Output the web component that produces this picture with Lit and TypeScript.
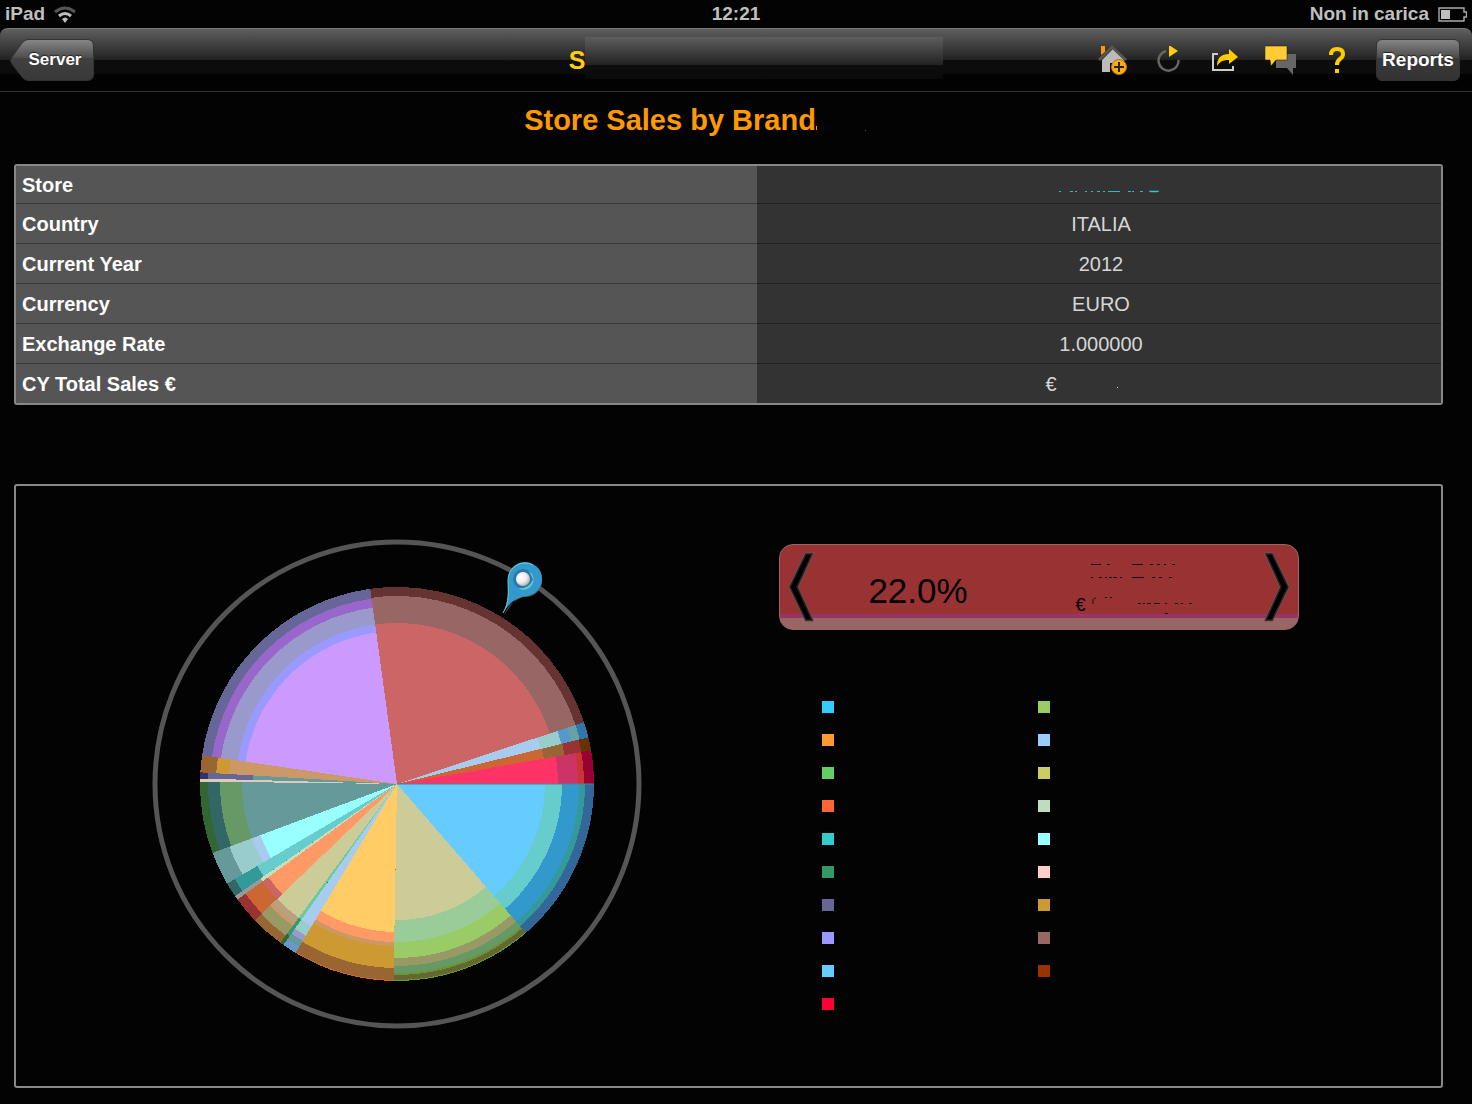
import { LitElement, html, svg, css } from "lit";
import { customElement } from "lit/decorators.js";

type Band = [outerRadius: number, colour: string];
interface Slice {
  end: number;
  bands: Band[];
}

/* Slices run clockwise from three o'clock; each one starts where the last ends. */
const SLICES: Slice[] = [
  { end: 49.1, bands: [[148, "#66ccff"], [165, "#66cccc"], [182, "#3399cc"], [188, "#339999"], [197, "#336699"]] },
  { end: 91, bands: [[136, "#cccc99"], [158, "#99cc99"], [174, "#99cc66"], [182, "#999966"], [189, "#669966"], [191, "#669933"], [196, "#666633"], [197, "#669933"]] },
  { end: 121, bands: [[148, "#ffcc66"], [158, "#ff9966"], [162, "#cc9966"], [184, "#cc9933"], [196, "#996633"], [197, "#cc6633"]] },
  { end: 125.2, bands: [[166, "#a8ccf0"], [177, "#99cccc"], [183, "#9999cc"], [190, "#669999"], [197, "#6699cc"]] },
  { end: 126.3, bands: [[166, "#66cc99"], [186, "#339966"], [197, "#336633"]] },
  { end: 136.2, bands: [[166, "#cccc99"], [173, "#b8a080"], [176, "#cc9966"], [188, "#999966"], [197, "#996633"]] },
  { end: 144.1, bands: [[159, "#ff9966"], [166, "#cc6666"], [187, "#cc6633"], [197, "#993333"]] },
  { end: 145.3, bands: [[166, "#ccddbb"], [197, "#999999"]] },
  { end: 149.6, bands: [[162, "#66cccc"], [188, "#339999"], [197, "#336666"]] },
  { end: 159.5, bands: [[146, "#99ffff"], [155, "#a8ccf0"], [179, "#99cccc"], [197, "#669999"]] },
  { end: 180.7, bands: [[155, "#669999"], [177, "#669966"], [189, "#336666"], [197, "#336633"]] },
  { end: 181.6, bands: [[197, "#ddccbb"]] },
  { end: 183.4, bands: [[144, "#669999"], [189, "#666699"], [197, "#333366"]] },
  { end: 188.4, bands: [[168, "#cc9966"], [181, "#cc9933"], [197, "#996633"]] },
  { end: 262.2, bands: [[153, "#cc99ff"], [161, "#9999ff"], [178, "#9999cc"], [187, "#9966cc"], [197, "#666699"]] },
  { end: 341.7, bands: [[161, "#cc6666"], [188, "#996666"], [197, "#663333"]] },
  { end: 346.3, bands: [[148, "#a8ccf0"], [169, "#99cccc"], [179, "#5599cc"], [188, "#66a0a8"], [197, "#3377aa"]] },
  { end: 350.2, bands: [[149, "#cc6633"], [170, "#996633"], [187, "#993333"], [197, "#663300"]] },
  { end: 360, bands: [[161, "#ff3366"], [181, "#cc3366"], [187, "#cc3333"], [197, "#990033"]] },
];

const LEGEND: string[][] = [
  ["#33ccff", "#ff9933", "#66cc66", "#ff6633", "#33cccc", "#339966", "#666699", "#9999ff", "#66ccff", "#ff0033"],
  ["#99cc66", "#99ccff", "#cccc66", "#c0dcc0", "#99ffff", "#ffcccc", "#cc9933", "#996666", "#993300"],
];

const sector = (from: number, to: number, r: number) => {
  const at = (deg: number) => {
    const a = (deg * Math.PI) / 180;
    return `${(r * Math.cos(a)).toFixed(2)} ${(r * Math.sin(a)).toFixed(2)}`;
  };
  return `M0 0L${at(from)}A${r} ${r} 0 0 1 ${at(to)}Z`;
};

@customElement("sales-pie")
class SalesPie extends LitElement {
  static styles = css`
    :host { display: block; width: 490px; max-width: 100%; }
    .pie { display: block; width: 100%; height: auto; }
  `;

  render() {
    let start = 0;
    const slices = SLICES.map((s) => {
      const from = start;
      start = s.end;
      return [...s.bands].reverse().map(([r, c]) => svg`<path d=${sector(from, s.end, r)} fill=${c}/>`);
    });
    return html`
      <svg class="pie" viewBox="-245 -245 490 490" role="img" aria-label="Store sales by brand">
        <defs>
          <radialGradient id="ball" cx="0.35" cy="0.35" r="0.8">
            <stop offset="0" stop-color="#fff"/><stop offset="0.5" stop-color="#eee"/><stop offset="1" stop-color="#999"/>
          </radialGradient>
        </defs>
        <circle r="242" fill="none" stroke="#555" stroke-width="5"/>
        <circle r="194" fill="#aa9977"/>
        <g shape-rendering="crispEdges">${slices}</g>
        <path d="M0 0H197" stroke="#3d8a99" stroke-width="1"/>
        <path d="M107 -169C111 -178 116 -184 127 -187A17 17 0 0 0 145 -201Q146 -211 141 -216Z" fill="#555"/>
        <path d="M105 -170C112 -181 111 -191 111 -204A17 17 0 1 1 129 -188C119 -186 114 -183 105 -170Z" fill="#3399cc"/>
        <path d="M106 -171C113 -182 111 -193 111 -204A17 17 0 0 1 136 -219" fill="none" stroke="#66cccc" stroke-width="1"/>
        <circle cx="126" cy="-205" r="10" fill="#2c78a8"/>
        <path d="M132 -213A10 10 0 0 1 121 -196A13 13 0 0 0 136 -205Z" fill="#66cccc"/>
        <circle cx="126" cy="-205" r="7" fill="url(#ball)"/>
      </svg>`;
  }
}

@customElement("app-root")
class AppRoot extends LitElement {
  static styles = css`
    :host {
      display: flex;
      flex-direction: column;
      min-height: 100vh;
      box-sizing: border-box;
      background: #030303;
      color: #fff;
      font-family: "Liberation Sans", Arial, sans-serif;
    }
    svg { display: block; }
    button { font: inherit; color: inherit; background: none; border: 0; padding: 0; cursor: pointer; }

    .status {
      display: grid;
      grid-template-columns: 1fr auto 1fr;
      align-items: center;
      height: 28px;
      padding: 0 5px;
      color: #bfbfbf;
      font-size: 19px;
      font-weight: bold;
      line-height: 28px;
    }
    .status-side { display: flex; align-items: center; gap: 9px; }
    .status-end { justify-content: flex-end; }

    .toolbar {
      display: grid;
      grid-template-columns: 1fr auto 1fr;
      align-items: center;
      height: 64px;
      box-sizing: border-box;
      padding: 0 12px 0 10px;
      border-top: 1px solid #7a7a7a;
      border-bottom: 1px solid #333;
      border-radius: 8px 8px 0 0;
      background: linear-gradient(#5e5e5e, #222 31px, #0d0d0d 31px, #0b0b0b 45px, #020202 45px);
    }
    .back {
      position: relative;
      justify-self: start;
      width: 84px;
      height: 42px;
      font-size: 17px;
      font-weight: bold;
      text-shadow: 0 -1px 1px #222;
    }
    .back-shape { position: absolute; inset: 0; }
    .back-label { position: relative; padding-left: 6px; }
    .title { display: flex; align-items: center; padding-left: 42px; }
    .title-text { color: #fc1; font-size: 25px; font-weight: bold; line-height: 42px; }
    .title-blank {
      width: 358px;
      height: 42px;
      margin-bottom: 4px;
      background: linear-gradient(#5e5e5e, #222 28px, #0d0d0d 28px, #0a0a0a);
    }
    .tools { display: flex; align-items: center; justify-content: flex-end; }
    .tool { display: grid; place-items: center; width: 56px; height: 42px; }
    .reports {
      width: 84px;
      height: 42px;
      margin-left: 11px;
      border: 1px solid #333;
      border-radius: 6px;
      background: linear-gradient(#858585, #4a4a4a 45%, #3a3a3a 46%, #333);
      font-size: 19px;
      font-weight: bold;
      text-shadow: 0 -1px 1px #222;
    }

    .content {
      flex: 1;
      display: flex;
      flex-direction: column;
      padding: 12px 29px 16px 14px;
    }
    .heading {
      display: flex;
      justify-content: center;
      margin: 0 0 28px;
      color: #f90;
      font-size: 29px;
      line-height: 32px;
    }
    .frame { border: 2px solid #888; border-radius: 3px; }
    .info-frame { overflow: hidden; }
    .info { width: 100%; border-collapse: separate; border-spacing: 0; font-size: 20px; line-height: 24px; }
    .info th, .info td { height: 40px; box-sizing: border-box; padding: 0 6px; border-bottom: 1px solid #222; }
    .info th { width: 52%; background: #555; text-align: left; border-bottom-color: #383838; }
    .info td { padding-left: 10px; background: #333; color: #d6d6d6; text-align: center; }
    .info tr:first-child > * { height: 38px; }
    .info tr:last-child > * { height: 39px; border-bottom: 0; }
    .masked { display: flex; align-items: center; justify-content: center; }

    .chart {
      flex: 1;
      display: grid;
      grid-template-columns: 535fr 465fr;
      align-items: start;
      margin-top: 79px;
      padding: 53px 0;
    }
    .pie-side { justify-self: center; }
    .detail-side { padding: 5px 0 0 1px; }
    .callout {
      display: flex;
      align-items: center;
      width: 520px;
      height: 86px;
      box-sizing: border-box;
      padding: 0 8px;
      border: 1px solid #966;
      border-radius: 14px;
      background: linear-gradient(#933 69px, #936 69px, #936 73px, #966 73px);
      color: #000;
    }
    .share { padding: 8px 0 0 54px; font-size: 35px; line-height: 40px; }
    .brand { width: 122px; margin-left: auto; margin-right: 67px; }
    .amount { display: flex; font-size: 18px; line-height: 20px; }

    .legend { display: flex; margin-top: 60px; padding-left: 43px; }
    .legend-column { width: 216px; margin: 0; padding: 0; list-style: none; }
    .legend-item { display: flex; align-items: center; height: 33px; }
    .swatch { width: 12px; height: 12px; }
  `;

  render() {
    return html`
      <div class="status">
        <div class="status-side">
          <span>iPad</span>
          <svg width="22" height="17" viewBox="0 0 22 17" fill="none" aria-hidden="true">
            <path d="M1 6Q11 -2 21 6" stroke="#555" stroke-width="3"/>
            <path d="M5 10Q11 5 17 10" stroke="#bfbfbf" stroke-width="3"/>
            <path d="M8 13Q11 10 14 13L11 17Z" fill="#bfbfbf"/>
          </svg>
        </div>
        <span>12:21</span>
        <div class="status-side status-end">
          <span>Non in carica</span>
          <svg width="29" height="15" viewBox="0 0 29 15" aria-hidden="true">
            <path d="M1 1H26V5H28.5V10H26V14H1Z" fill="none" stroke="#aaa" stroke-width="1.4"/>
            <path d="M3 3H12V12H3Z" fill="#bfbfbf"/>
          </svg>
        </div>
      </div>

      <header class="toolbar">
        <button class="back">
          <svg class="back-shape" width="84" height="42" viewBox="0 0 84 42" aria-hidden="true">
            <defs>
              <linearGradient id="back-fill" x2="0" y2="1">
                <stop offset="0" stop-color="#888"/><stop offset="0.45" stop-color="#4c4c4c"/>
                <stop offset="0.46" stop-color="#404040"/><stop offset="1" stop-color="#383838"/>
              </linearGradient>
            </defs>
            <path d="M18 .5H77Q83.500 .5 83.500 7V35Q83.500 41.500 77 41.500H18Q15 41.500 12 38L2 25Q-1 21.500 2 18L12 4Q15 .5 18 .5Z" fill="url(#back-fill)" stroke="#333"/>
          </svg>
          <span class="back-label">Server</span>
        </button>
        <div class="title"><span class="title-text">S</span><span class="title-blank"></span></div>
        <div class="tools">
          <button class="tool" aria-label="Add to home">
            <svg width="30" height="32" viewBox="0 0 30 32">
              <path d="M3 2H7V8L3 11Z" fill="#f90"/>
              <path d="M15 5L26 16V28H18V19H12V28H4V16Z" fill="#bbb"/>
              <path d="M1 16L14 3L28 16" fill="none" stroke="#555" stroke-width="3"/>
              <circle cx="21" cy="23" r="7.500" fill="#fa1" stroke="#b70"/>
              <path d="M21 18V28M16 23H26" stroke="#222" stroke-width="2"/>
            </svg>
          </button>
          <button class="tool" aria-label="Refresh">
            <svg width="24" height="28" viewBox="0 0 24 28">
              <path d="M9 5A10 10 0 1 0 21.500 14" fill="none" stroke="#666" stroke-width="2.500"/>
              <path d="M12 -1L21 5L12 11Z" fill="#fc1"/>
            </svg>
          </button>
          <button class="tool" aria-label="Share">
            <svg width="28" height="24" viewBox="0 0 28 24">
              <path d="M7 6H2V22H22V18" fill="none" stroke="#ccc" stroke-width="2"/>
              <path d="M6 18Q6 6 18 6V1L27 9L18 16V12Q10 11 6 18Z" fill="#fc0"/>
            </svg>
          </button>
          <button class="tool" aria-label="Comments">
            <svg width="32" height="30" viewBox="0 0 32 30">
              <path d="M11 9H31V23H28V30L22 23H11Z" fill="#666"/>
              <path d="M0 1H22V15H11L6 21L5 15H0Z" fill="#fc3" stroke="#151515" stroke-width=".5"/>
            </svg>
          </button>
          <button class="tool" aria-label="Help">
            <svg width="18" height="28" viewBox="0 0 18 28">
              <path d="M3 9Q3 3 9 3Q15 3 15 8Q15 11 12 13Q9 15 9 19" fill="none" stroke="#fc0" stroke-width="4"/>
              <path d="M7 23H11V27H7Z" fill="#fc0"/>
            </svg>
          </button>
          <button class="reports">Reports</button>
        </div>
      </header>

      <main class="content">
        <h1 class="heading">
          <span>Store Sales by Brand</span>
          <svg width="117" height="32" viewBox="0 0 117 32" aria-hidden="true">
            <path d="M-2 26L0 19V26Z" fill="#f90"/>
            <path d="M0 26V22H1V26Z" fill="#f90"/>
            <path d="M49 26H50V27H49Z" fill="#654"/>
          </svg>
        </h1>

        <div class="frame info-frame">
          <table class="info">
            <tbody>
              <tr>
                <th scope="row">Store</th>
                <td>
                  <div class="masked">
                    <svg width="116" height="24" viewBox="0 0 116 24" aria-hidden="true">
                      <path d="M16 18.500h2M27 18.500h3M32 18.500h2M42 18.500h2M48 18.500h2M54 18.500h3M60 18.500h2M65 18.500h12M85 18.500h3M89 18.500h2M97 18.500h3" stroke="#3bb" fill="none"/>
                      <path d="M106 18h10l-2 1h-6z" fill="#3cc" stroke="#3cc" stroke-width=".5"/>
                    </svg>
                  </div>
                </td>
              </tr>
              <tr><th scope="row">Country</th><td>ITALIA</td></tr>
              <tr><th scope="row">Current Year</th><td>2012</td></tr>
              <tr><th scope="row">Currency</th><td>EURO</td></tr>
              <tr><th scope="row">Exchange Rate</th><td>1.000000</td></tr>
              <tr>
                <th scope="row">CY Total Sales €</th>
                <td>
                  <div class="masked">
                    <span>€</span>
                    <svg width="100" height="24" viewBox="0 0 100 24" aria-hidden="true"><path d="M60 15h1v1h-1z" fill="#d6d6d6"/></svg>
                  </div>
                </td>
              </tr>
            </tbody>
          </table>
        </div>

        <section class="frame chart">
          <sales-pie class="pie-side"></sales-pie>
          <div class="detail-side">
            <div class="callout">
              <button aria-label="Previous brand">${this.chevron("M18 2H24L9 35L24 68H18L2 35Z")}</button>
              <span class="share">22.0%</span>
              <div class="brand">
                <svg width="122" height="36" viewBox="0 0 122 36" fill="none" stroke="#111" stroke-width="1.200" aria-hidden="true">
                  <path d="M16 5.500h10M32 5.500h3M57 5.500h11M75 5.500h3M82 5.500h3M89 5.500h2M97 5.500h3"/>
                  <path d="M16 18.500h2M24 18.500h3M30 18.500h2M34 18.500h3M38 18.500h4M45 18.500h2M57 18.500h12M77 18.500h3M84 18.500h3M94 18.500h3"/>
                </svg>
                <div class="amount">
                  <span>€</span>
                  <svg width="112" height="20" viewBox="0 0 112 20" fill="none" stroke="#111" aria-hidden="true">
                    <path d="M11 3Q7 3 8 9M20 2.500h2M25 2.500h2M53 8.500h3M58 8.500h2M62 8.500h4M69 8.500h6M80 8.500h2M90 8.500h3M96 8.500h2M104 8.500h3M80 18.500h3"/>
                  </svg>
                </div>
              </div>
              <button aria-label="Next brand">${this.chevron("M8 2H2L17 35L2 68H8L24 35Z")}</button>
            </div>
            <div class="legend">
              ${LEGEND.map((column) => html`
                <ul class="legend-column">
                  ${column.map((c) => html`<li class="legend-item"><span class="swatch" style="background:${c}"></span></li>`)}
                </ul>`)}
            </div>
          </div>
        </section>
      </main>`;
  }

  private chevron(d: string) {
    return html`
      <svg width="26" height="70" viewBox="0 0 26 70" aria-hidden="true">
        <path d=${d} fill="#000" stroke="#6e5555" stroke-width="3"/>
        <path d=${d} fill="#000" stroke="#222" stroke-width="1.500"/>
      </svg>`;
  }
}
